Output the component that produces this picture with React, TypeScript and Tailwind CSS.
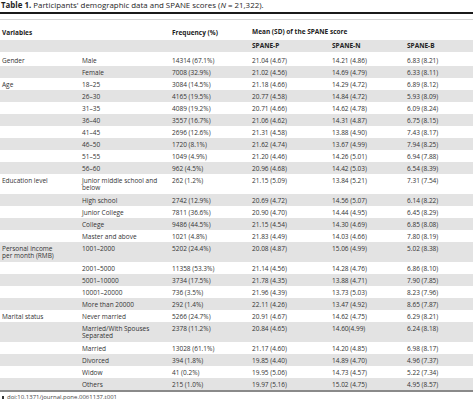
type Row = {
  group?: string;
  label: string;
  freq: string;
  p: string;
  n: string;
  b: string;
  tall?: boolean;
};

const rows: Row[] = [
  { group: "Gender", label: "Male", freq: "14314 (67.1%)", p: "21.04 (4.67)", n: "14.21 (4.86)", b: "6.83 (8.21)" },
  { label: "Female", freq: "7008 (32.9%)", p: "21.02 (4.56)", n: "14.69 (4.79)", b: "6.33 (8.11)" },
  { group: "Age", label: "18–25", freq: "3084 (14.5%)", p: "21.18 (4.66)", n: "14.29 (4.72)", b: "6.89 (8.12)" },
  { label: "26–30", freq: "4165 (19.5%)", p: "20.77 (4.58)", n: "14.84 (4.72)", b: "5.93 (8.09)" },
  { label: "31–35", freq: "4089 (19.2%)", p: "20.71 (4.66)", n: "14.62 (4.78)", b: "6.09 (8.24)" },
  { label: "36–40", freq: "3557 (16.7%)", p: "21.06 (4.62)", n: "14.31 (4.87)", b: "6.75 (8.15)" },
  { label: "41–45", freq: "2696 (12.6%)", p: "21.31 (4.58)", n: "13.88 (4.90)", b: "7.43 (8.17)" },
  { label: "46–50", freq: "1720 (8.1%)", p: "21.62 (4.74)", n: "13.67 (4.99)", b: "7.94 (8.25)" },
  { label: "51–55", freq: "1049 (4.9%)", p: "21.20 (4.46)", n: "14.26 (5.01)", b: "6.94 (7.88)" },
  { label: "56–60", freq: "962 (4.5%)", p: "20.96 (4.68)", n: "14.42 (5.03)", b: "6.54 (8.39)" },
  { group: "Education level", label: "Junior middle school and below", freq: "262 (1.2%)", p: "21.15 (5.09)", n: "13.84 (5.21)", b: "7.31 (7.54)", tall: true },
  { label: "High school", freq: "2742 (12.9%)", p: "20.69 (4.72)", n: "14.56 (5.07)", b: "6.14 (8.22)" },
  { label: "Junior College", freq: "7811 (36.6%)", p: "20.90 (4.70)", n: "14.44 (4.95)", b: "6.45 (8.29)" },
  { label: "College", freq: "9486 (44.5%)", p: "21.15 (4.54)", n: "14.30 (4.69)", b: "6.85 (8.08)" },
  { label: "Master and above", freq: "1021 (4.8%)", p: "21.83 (4.49)", n: "14.03 (4.66)", b: "7.80 (8.19)" },
  { group: "Personal income\nper month (RMB)", label: "1001–2000", freq: "5202 (24.4%)", p: "20.08 (4.87)", n: "15.06 (4.99)", b: "5.02 (8.38)", tall: true },
  { label: "2001–5000", freq: "11358 (53.3%)", p: "21.14 (4.56)", n: "14.28 (4.76)", b: "6.86 (8.10)" },
  { label: "5001–10000", freq: "3734 (17.5%)", p: "21.78 (4.35)", n: "13.88 (4.71)", b: "7.90 (7.85)" },
  { label: "10001–20000", freq: "736 (3.5%)", p: "21.96 (4.39)", n: "13.73 (5.03)", b: "8.23 (7.96)" },
  { label: "More than 20000", freq: "292 (1.4%)", p: "22.11 (4.26)", n: "13.47 (4.92)", b: "8.65 (7.87)" },
  { group: "Marital status", label: "Never married", freq: "5266 (24.7%)", p: "20.91 (4.67)", n: "14.62 (4.75)", b: "6.29 (8.21)" },
  { label: "Married/With Spouses Separated", freq: "2378 (11.2%)", p: "20.84 (4.65)", n: "14.60(4.99)", b: "6.24 (8.18)", tall: true },
  { label: "Married", freq: "13028 (61.1%)", p: "21.17 (4.60)", n: "14.20 (4.85)", b: "6.98 (8.17)" },
  { label: "Divorced", freq: "394 (1.8%)", p: "19.85 (4.40)", n: "14.89 (4.70)", b: "4.96 (7.37)" },
  { label: "Widow", freq: "41 (0.2%)", p: "19.95 (5.06)", n: "14.73 (4.57)", b: "5.22 (7.34)" },
  { label: "Others", freq: "215 (1.0%)", p: "19.97 (5.16)", n: "15.02 (4.75)", b: "4.95 (8.57)" },
];

const cols = "grid grid-cols-[80px_90px_80px_80px_75px_1fr] pl-[2px]";

export default function App() {
  return (
    <div className="h-[404px] w-[474px] overflow-hidden bg-white font-['Open_Sans',sans-serif] text-[#333]">
      <div className="pl-[1px] pt-[1px] text-[7.9px] leading-[9px] text-[#1e1e1e]">
        <span className="font-bold">Table 1.</span> Participants' demographic data and SPANE scores (
        <span className="italic">N</span> = 21,322).
      </div>
      <div className="mt-[2px] w-[473px] border-t-2 border-[#1a1a1a]" />
      <div className="mt-[5px] w-[473px] border-t border-[#d6d6d6]" />
      <div className={`${cols} h-[20px] items-end pb-[4px] text-[6.5px] font-bold leading-[7.5px] text-[#222]`}>
        <div>Variables</div>
        <div />
        <div>Frequency (%)</div>
        <div className="col-span-3 pb-[1px]">Mean (SD) of the SPANE score</div>
      </div>
      <div className={`${cols} h-[12px] w-[473px] items-center bg-[#e3e3e3] text-[6.5px] font-bold leading-[7.5px] text-[#222]`}>
        <div />
        <div />
        <div />
        <div>SPANE-P</div>
        <div>SPANE-N</div>
        <div>SPANE-B</div>
      </div>
      <div className="mt-[2px] w-[473px]">
        {rows.map((r, i) => (
          <div
            key={r.label}
            className={`${cols} ${r.tall ? "h-[20px]" : "h-[12px]"} pt-[2.5px] text-[6.5px] leading-[7.5px] ${i % 2 === 1 ? "bg-[#e3e3e3]" : "bg-white"}`}
          >
            <div className="whitespace-pre-line pr-[6px]">{r.group}</div>
            <div className="pr-[6px]">{r.label}</div>
            <div>{r.freq}</div>
            <div>{r.p}</div>
            <div>{r.n}</div>
            <div>{r.b}</div>
          </div>
        ))}
      </div>
      <div className="w-[473px] border-t-2 border-[#8a8a8a]" />
      <div className="flex items-center gap-[3px] pl-[2px] pt-[2px] text-[6px] leading-[7px] text-[#444]">
        <span className="h-[3px] w-[2px] bg-[#333]" />
        <span>doi:10.1371/journal.pone.0061137.t001</span>
      </div>
    </div>
  );
}
